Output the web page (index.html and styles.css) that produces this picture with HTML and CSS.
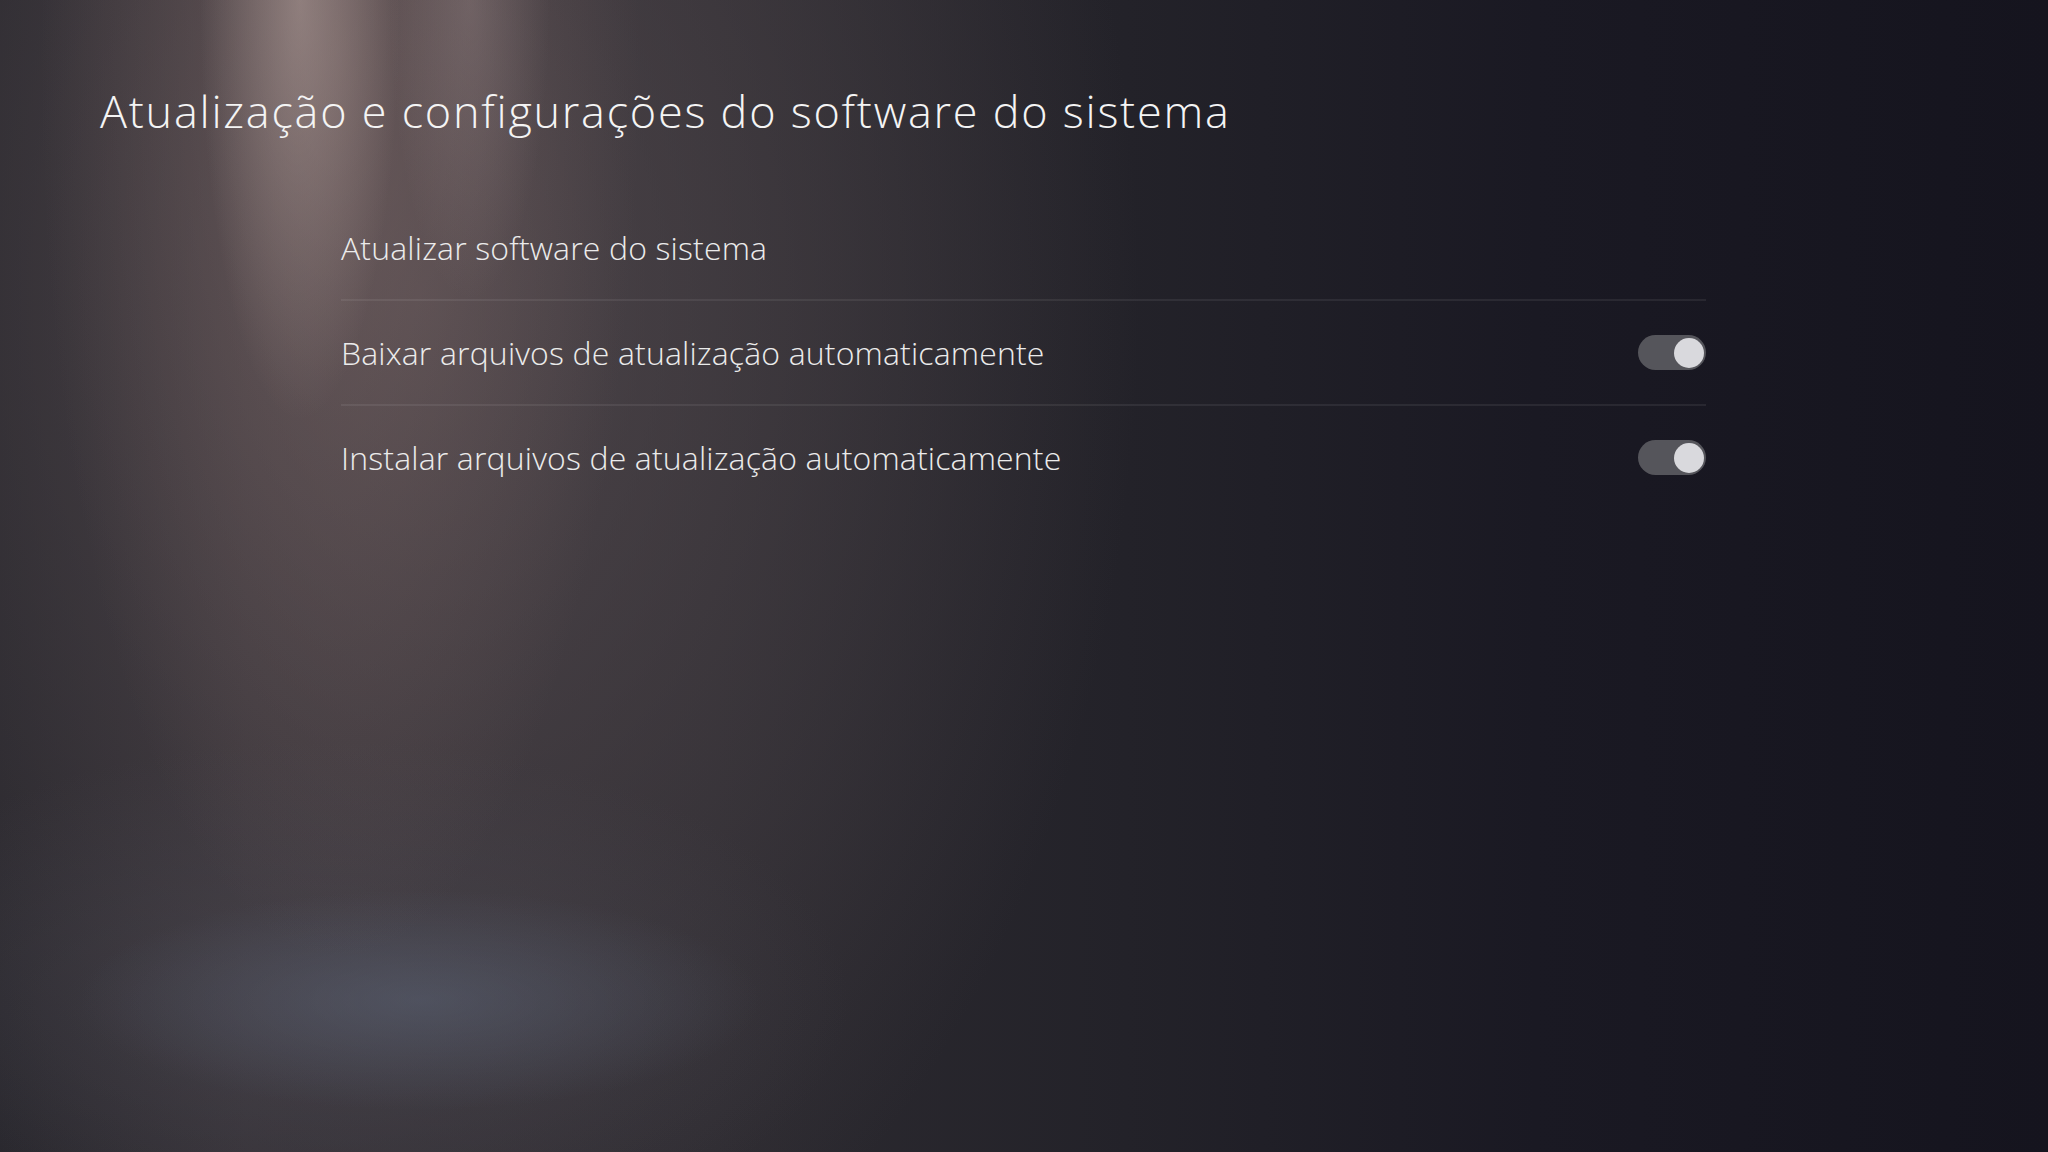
FILE: index.html
```html
<!DOCTYPE html>
<html lang="pt-BR">
<head>
    <meta charset="UTF-8">
    <meta name="viewport" content="width=device-width, initial-scale=1.0">
    <title>Atualização e configurações do software do sistema</title>
    <link rel="stylesheet" href="styles.css">
</head>
<body>
    <div class="screen">
        <h1 class="page-title">Atualização e configurações do software do sistema</h1>

        <div class="settings-list">
            <div class="setting-row">
                <span class="setting-label">Atualizar software do sistema</span>
            </div>
            <div class="setting-row">
                <span class="setting-label">Baixar arquivos de atualização automaticamente</span>
                <span class="toggle on"><span class="knob"></span></span>
            </div>
            <div class="setting-row">
                <span class="setting-label">Instalar arquivos de atualização automaticamente</span>
                <span class="toggle on"><span class="knob"></span></span>
            </div>
        </div>
    </div>
</body>
</html>
```

FILE: styles.css
```css
html, body {
    margin: 0;
    padding: 0;
    background: #16151e;
}
body {
    font-family: "Open Sans", "Noto Sans", sans-serif;
    color: #f0f0f0;
}
.screen {
    width: 2048px;
    height: 1152px;
    overflow: hidden;
    box-sizing: border-box;
    padding: 83px 0 0 100px;
    /* light beams from the top-left, blue haze near the floor */
    background:
        radial-gradient(ellipse 100px 420px at 300px 0px, rgba(190,170,165,0.5), rgba(190,170,165,0) 100%),
        radial-gradient(ellipse 80px 300px at 470px 0px, rgba(170,150,150,0.3), rgba(170,150,150,0) 100%),
        radial-gradient(ellipse 300px 900px at 340px 60px, rgba(140,115,112,0.45), rgba(140,115,112,0) 100%),
        radial-gradient(ellipse 340px 110px at 420px 1000px, rgba(95,105,125,0.45), rgba(95,105,125,0) 100%),
        radial-gradient(ellipse 520px 260px at 330px 1000px, rgba(80,78,88,0.45), rgba(80,78,88,0) 100%),
        radial-gradient(ellipse 720px 1100px at 420px 300px, rgba(88,78,82,0.75), rgba(88,78,82,0) 100%),
        linear-gradient(90deg, #26252b 0%, #302d33 12%, #2c2a30 35%, #232229 55%, #1a1923 75%, #15141e 100%);
}
.page-title {
    margin: 0;
    font-size: 45px;
    font-weight: 300;
    line-height: 56px;
    letter-spacing: 1.75px;
    color: #f4f4f4;
}
.settings-list {
    width: 1365px;
    margin: 57px 0 0 241px;
}
.setting-row {
    display: flex;
    align-items: center;
    justify-content: space-between;
    height: 103px;
    border-bottom: 2px solid rgba(255,255,255,0.07);
}
.setting-row:last-child {
    border-bottom: none;
}
.setting-label {
    font-size: 32px;
    font-weight: 300;
    letter-spacing: 0.15px;
    color: #ebebeb;
}
.toggle {
    display: flex;
    align-items: center;
    width: 68px;
    height: 35px;
    box-sizing: border-box;
    padding: 0 2px;
    border-radius: 18px;
    background: #55555b;
}
.toggle.on {
    justify-content: flex-end;
}
.toggle .knob {
    width: 30px;
    height: 30px;
    border-radius: 50%;
    background: #d9d9dd;
}
```
